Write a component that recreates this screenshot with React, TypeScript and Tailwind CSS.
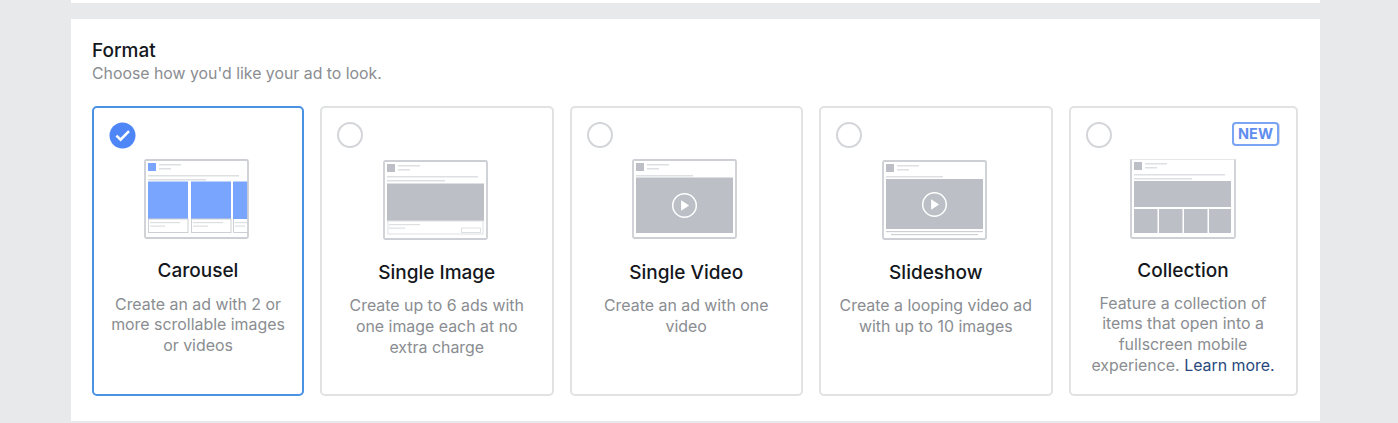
import React from "react";

const L = "#dddfe2";
const O = "#cccfd3";
const G = "#bcc0c6";
const B = "#7aa5ff";

function Frame({ children, h = 78 }: { children: React.ReactNode; h?: number }) {
  return (
    <svg width="105" height={h + 2} viewBox={`0 0 105 ${h + 2}`} className="block">
      {children}
      <rect x="1" y="1" width="103" height={h} rx="1.5" fill="none" stroke={O} strokeWidth="1.8" />
    </svg>
  );
}

function Header({ c = G, lines = 2 }: { c?: string; lines?: number }) {
  return (
    <>
      <rect x="4" y="4" width="8" height="8" fill={c} />
      <rect x="15" y="5" width="22" height="1.5" fill={L} />
      <rect x="15" y="9" width="12" height="1.5" fill={L} />
      <rect x="4" y="16" width={lines === 2 ? 91 : 57} height="1.5" fill={L} />
      {lines === 2 && <rect x="4" y="20" width="58" height="1.5" fill={L} />}
    </>
  );
}

function Play({ cx, cy }: { cx: number; cy: number }) {
  return (
    <>
      <circle cx={cx} cy={cy} r="11.8" fill="none" stroke="#fff" strokeWidth="1.5" />
      <path d={`M${cx - 3.4} ${cy - 5.2}L${cx + 4.6} ${cy}L${cx - 3.4} ${cy + 5.2}Z`} fill="#fff" />
    </>
  );
}

function CarouselArt() {
  return (
    <Frame>
      <Header c={B} />
      {[4, 47].map((x) => (
        <g key={x}>
          <rect x={x} y="22.5" width="40" height="37.5" fill={B} />
          <rect x={x + 0.5} y="60" width="39.5" height="13.5" fill="none" stroke={O} />
          <rect x={x + 2} y="63" width="30" height="1.2" fill={L} />
          <rect x={x + 2} y="66.5" width="15" height="1.2" fill={L} />
        </g>
      ))}
      <rect x="89" y="22.5" width="15" height="37.5" fill={B} />
      <path d="M89.5 60V73.5H104" fill="none" stroke={O} />
      <rect x="91" y="63" width="12" height="1.2" fill={L} />
      <rect x="91" y="66.5" width="10" height="1.2" fill={L} />
    </Frame>
  );
}

function ImageArt() {
  return (
    <Frame>
      <Header />
      <rect x="4" y="23.5" width="97" height="37.5" fill={G} />
      <rect x="5" y="61" width="95" height="13" fill="none" stroke={L} />
      <rect x="6" y="64" width="31" height="1.2" fill={L} />
      <rect x="6" y="67.5" width="16" height="1.2" fill={L} />
      <rect x="78.5" y="68" width="19" height="4.5" fill="none" stroke={L} />
    </Frame>
  );
}

function VideoArt() {
  return (
    <Frame>
      <Header lines={1} />
      <rect x="4" y="18.5" width="97" height="55.5" fill={G} />
      <Play cx={52.5} cy={46.5} />
    </Frame>
  );
}

function SlideshowArt() {
  return (
    <Frame>
      <Header lines={1} />
      <rect x="4" y="19" width="97" height="50" fill={G} />
      <Play cx={52.5} cy={44.5} />
      <rect x="4" y="71" width="97" height="1.2" fill={O} />
      <rect x="9" y="74" width="87" height="1.2" fill={O} />
    </Frame>
  );
}

function CollectionArt() {
  return (
    <svg width="106" height="80" viewBox="0 0 106 80" className="block">
      <path d="M1 0V77.5A1.5 1.5 0 0 0 2.5 79H103.5A1.5 1.5 0 0 0 105 77.5V0" fill="none" stroke={O} strokeWidth="1.8" />
      <path d="M1 .5H105" stroke="#e6e7ea" strokeWidth="1" />
      <rect x="4" y="3" width="8" height="8" fill={G} />
      <rect x="15" y="4" width="22" height="1.5" fill={L} />
      <rect x="15" y="8" width="12" height="1.5" fill={L} />
      <rect x="4" y="15" width="91" height="1.5" fill={L} />
      <rect x="4" y="19" width="58" height="1.5" fill={L} />
      <rect x="4" y="22" width="97" height="26" fill={G} />
      <rect x="4" y="50" width="23.5" height="24" fill={G} />
      <rect x="29" y="50" width="23.5" height="24" fill={G} />
      <rect x="54" y="50" width="23.5" height="24" fill={G} />
      <rect x="79" y="50" width="22" height="24" fill={G} />
    </svg>
  );
}

type Card = {
  w: string;
  art: React.ReactNode;
  artPad: string;
  title: string;
  titlePad: string;
  descPad: string;
  desc: React.ReactNode;
  selected?: boolean;
  badge?: boolean;
};

const cards: Card[] = [
  {
    w: "w-[212px]",
    art: <CarouselArt />,
    artPad: "mt-[10px] pr-[3px]",
    title: "Carousel",
    titlePad: "mt-[21px]",
    descPad: "mt-[13px] leading-[20.7px]",
    desc: <>Create an ad with 2 or more scrollable images or videos</>,
    selected: true,
  },
  {
    w: "w-[233.5px]",
    art: <ImageArt />,
    artPad: "mt-[11px] pr-[2px]",
    title: "Single Image",
    titlePad: "mt-[22px]",
    descPad: "mt-[11px] leading-[21px]",
    desc: <>Create up to 6 ads with one image each at no extra charge</>,
  },
  {
    w: "w-[233.5px]",
    art: <VideoArt />,
    artPad: "mt-[10px] pr-[4px]",
    title: "Single Video",
    titlePad: "mt-[23px]",
    descPad: "mt-[11px] leading-[21px]",
    desc: <>Create an ad with one video</>,
  },
  {
    w: "w-[233.5px]",
    art: <SlideshowArt />,
    artPad: "mt-[11px] pr-[3px]",
    title: "Slideshow",
    titlePad: "mt-[22px]",
    descPad: "mt-[11px] leading-[21px]",
    desc: <>Create a looping video ad with up to 10 images</>,
  },
  {
    w: "w-[229px]",
    art: <CollectionArt />,
    artPad: "mt-[10px]",
    title: "Collection",
    titlePad: "mt-[21px]",
    descPad: "mt-[12px] leading-[20.8px]",
    desc: (
      <>
        Feature a collection of items that open into a fullscreen mobile experience.{" "}
        <span className="text-[#29487d]">Learn more.</span>
      </>
    ),
    badge: true,
  },
];

function Radio({ selected }: { selected?: boolean }) {
  if (selected) {
    return (
      <svg width="27" height="27" viewBox="0 0 27 27" className="block">
        <circle cx="13.5" cy="13.5" r="13" fill="#4f86f7" />
        <path d="M7.4 13.6L11.6 17.6L20 9.2" fill="none" stroke="#fff" strokeWidth="2.6" />
      </svg>
    );
  }
  return <div className="h-[26px] w-[26px] rounded-full border-2 border-[#d3d5d8]" />;
}

export default function App() {
  return (
    <div className="h-[423px] w-[1398px] overflow-hidden bg-[#e8e9eb] px-[71px] font-['Inter','Liberation_Sans',sans-serif]">
      <div className="h-[3px] w-[1249px] bg-white" />
      <section className="mt-[16px] h-[402px] w-[1249px] bg-white pl-[21px] pt-[21px]">
        <h2 className="text-[19px] leading-[22px] font-[550] text-[#14171c]">Format</h2>
        <p className="mt-[1px] text-[15.85px] leading-[22px] text-[#8a8d91]">Choose how you'd like your ad to look.</p>
        <div className="mt-[21px] flex gap-[16px]">
          {cards.map((c) => (
            <div
              key={c.title}
              className={`${c.w} h-[290px] shrink-0 rounded-[5px] border-2 pt-[13.5px] ${
                c.selected ? "border-[#4a92e4]" : "border-[#e0e2e4]"
              }`}
            >
              <div className="flex h-[27px] items-start justify-between pl-[15px] pr-[16.5px]">
                <Radio selected={c.selected} />
                {c.badge && (
                  <span className="flex h-[24px] w-[47px] items-center justify-center rounded-[4px] border-2 border-[#7aa5f5] text-[14.5px] font-bold text-[#5f8eee] shadow-[2px_0_0_-1px_#d8dadd]">
                    NEW
                  </span>
                )}
              </div>
              <div className={`flex justify-center ${c.artPad}`}>{c.art}</div>
              <h3 className={`${c.titlePad} text-center text-[19px] leading-[22px] font-[550] text-[#14171c]`}>
                {c.title}
              </h3>
              <p className={`${c.descPad} px-[16px] text-center text-[15.9px] text-[#8a8d91]`}>{c.desc}</p>
            </div>
          ))}
        </div>
      </section>
    </div>
  );
}
